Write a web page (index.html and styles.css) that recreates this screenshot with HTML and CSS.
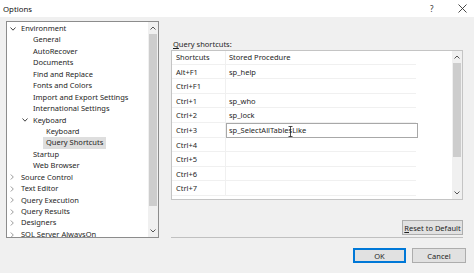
FILE: index.html
```html
<!DOCTYPE html>
<html lang="en">
<head>
    <meta charset="UTF-8">
    <title>Options</title>
    <link rel="stylesheet" href="styles.css">
</head>
<body>
<div class="titlebar">
    <span class="title">Options</span>
    <span class="help">?</span>
    <span class="close">
        <svg width="9" height="9" viewBox="0 0 9 9"><path d="M0.5 0.5L8.5 8.5M8.5 0.5L0.5 8.5" stroke="#333" stroke-width="0.9" fill="none"/></svg>
    </span>
</div>

<div class="main">
    <div class="tree">
        <div class="tree-list">
            <div class="node lv0"><span class="chev"><svg width="6" height="4" viewBox="0 0 6 4"><path d="M0.5 0.5L3 3.2L5.5 0.5" stroke="#444" fill="none"/></svg></span>Environment</div>
            <div class="node lv1"><span class="chev"></span>General</div>
            <div class="node lv1"><span class="chev"></span>AutoRecover</div>
            <div class="node lv1"><span class="chev"></span>Documents</div>
            <div class="node lv1"><span class="chev"></span>Find and Replace</div>
            <div class="node lv1"><span class="chev"></span>Fonts and Colors</div>
            <div class="node lv1"><span class="chev"></span>Import and Export Settings</div>
            <div class="node lv1"><span class="chev"></span>International Settings</div>
            <div class="node lv1"><span class="chev"><svg width="6" height="4" viewBox="0 0 6 4"><path d="M0.5 0.5L3 3.2L5.5 0.5" stroke="#444" fill="none"/></svg></span>Keyboard</div>
            <div class="node lv2"><span class="chev"></span>Keyboard</div>
            <div class="node lv2"><span class="chev"></span><span class="selected">Query Shortcuts</span></div>
            <div class="node lv1"><span class="chev"></span>Startup</div>
            <div class="node lv1"><span class="chev"></span>Web Browser</div>
            <div class="node lv0"><span class="chev"><svg width="4" height="6" viewBox="0 0 4 6"><path d="M0.8 0.5L3.3 3L0.8 5.5" stroke="#999" fill="none"/></svg></span>Source Control</div>
            <div class="node lv0"><span class="chev"><svg width="4" height="6" viewBox="0 0 4 6"><path d="M0.8 0.5L3.3 3L0.8 5.5" stroke="#999" fill="none"/></svg></span>Text Editor</div>
            <div class="node lv0"><span class="chev"><svg width="4" height="6" viewBox="0 0 4 6"><path d="M0.8 0.5L3.3 3L0.8 5.5" stroke="#999" fill="none"/></svg></span>Query Execution</div>
            <div class="node lv0"><span class="chev"><svg width="4" height="6" viewBox="0 0 4 6"><path d="M0.8 0.5L3.3 3L0.8 5.5" stroke="#999" fill="none"/></svg></span>Query Results</div>
            <div class="node lv0"><span class="chev"><svg width="4" height="6" viewBox="0 0 4 6"><path d="M0.8 0.5L3.3 3L0.8 5.5" stroke="#999" fill="none"/></svg></span>Designers</div>
            <div class="node lv0"><span class="chev"><svg width="4" height="6" viewBox="0 0 4 6"><path d="M0.8 0.5L3.3 3L0.8 5.5" stroke="#999" fill="none"/></svg></span>SQL Server AlwaysOn</div>
        </div>
        <div class="vscroll tree-scroll">
            <div class="arrow"><svg width="6" height="4" viewBox="0 0 6 4"><path d="M0.5 3.5L3 1L5.5 3.5" stroke="#555" fill="none"/></svg></div>
            <div class="thumb"></div>
            <div class="track"></div>
            <div class="arrow"><svg width="6" height="4" viewBox="0 0 6 4"><path d="M0.5 0.5L3 3L5.5 0.5" stroke="#555" fill="none"/></svg></div>
        </div>
    </div>

    <div class="panel">
        <div class="label"><u>Q</u>uery shortcuts:</div>
        <div class="grid-box">
            <div class="grid">
                <div class="row head"><div class="c1">Shortcuts</div><div class="c2">Stored Procedure</div></div>
                <div class="row"><div class="c1">Alt+F1</div><div class="c2">sp_help</div></div>
                <div class="row"><div class="c1">Ctrl+F1</div><div class="c2"></div></div>
                <div class="row"><div class="c1">Ctrl+1</div><div class="c2">sp_who</div></div>
                <div class="row"><div class="c1">Ctrl+2</div><div class="c2">sp_lock</div></div>
                <div class="row"><div class="c1">Ctrl+3</div><div class="c2 edit">sp_SelectAllTablesLike
                    <svg class="ibeam" width="5" height="11" viewBox="0 0 5 11"><path d="M0.5 0.5H4.5M2.5 0.5V10.5M0.5 10.5H4.5" stroke="#222" stroke-width="0.8" fill="none"/></svg>
                </div></div>
                <div class="row"><div class="c1">Ctrl+4</div><div class="c2"></div></div>
                <div class="row"><div class="c1">Ctrl+5</div><div class="c2"></div></div>
                <div class="row"><div class="c1">Ctrl+6</div><div class="c2"></div></div>
                <div class="row"><div class="c1">Ctrl+7</div><div class="c2"></div></div>
            </div>
            <div class="vscroll grid-scroll">
                <div class="arrow"><svg width="6" height="4" viewBox="0 0 6 4"><path d="M0.5 3.5L3 1L5.5 3.5" stroke="#555" fill="none"/></svg></div>
                <div class="thumb"></div>
                <div class="track"></div>
                <div class="arrow"><svg width="6" height="4" viewBox="0 0 6 4"><path d="M0.5 0.5L3 3L5.5 0.5" stroke="#555" fill="none"/></svg></div>
            </div>
        </div>
        <div class="reset-row"><button class="btn reset"><u>R</u>eset to Default</button></div>
        <div class="sep"></div>
    </div>
</div>

<div class="footer">
    <button class="btn ok">OK</button>
    <button class="btn cancel">Cancel</button>
</div>
</body>
</html>
```

FILE: styles.css
```css
body{
    margin: 0;
    width: 474px;
    height: 273px;
    overflow: hidden;
    background-color: #f0f0f0;
    font-family: "Noto Sans", "Open Sans", sans-serif;
    font-size: 7.5px;
    color: #1e1e1e;
}
.titlebar{
    height: 17px;
    background-color: #ffffff;
    display: flex;
    align-items: center;
    padding-left: 3px;
}
.title{
    flex: 1;
    font-size: 7.8px;
    color: #111;
}
.help{
    width: 28px;
    font-size: 8px;
    color: #333;
}
.close{
    width: 16px;
    display: flex;
    align-items: center;
}

/* main area */
.main{
    display: flex;
    height: 217px;
    padding: 4px 0 0 6px;
}
.tree{
    width: 151px;
    height: 215px;
    border: 1px solid #8c8c8c;
    background-color: #ffffff;
    display: flex;
}
.tree-list{
    flex: 1;
    padding-top: 1px;
    overflow: hidden;
}
.node{
    height: 11.45px;
    line-height: 11.45px;
    display: flex;
    align-items: center;
    white-space: nowrap;
}
.chev{
    width: 13px;
    display: flex;
    align-items: center;
    padding-left: 2px;
    box-sizing: border-box;
}
.lv0{ padding-left: 1px; }
.lv1{ padding-left: 13px; }
.lv2{ padding-left: 26px; }
.selected{
    background-color: #dedede;
    padding: 0 3px;
    margin-left: -3px;
}

/* scrollbars */
.vscroll{
    width: 10px;
    display: flex;
    flex-direction: column;
    background-color: #f0f0f0;
}
.arrow{
    height: 12px;
    display: flex;
    align-items: center;
    justify-content: center;
}
.thumb{
    background-color: #cdcdcd;
    margin: 0 1px;
}
.track{
    flex: 1;
}
.tree-scroll .thumb{ height: 172px; }
.grid-scroll .thumb{ height: 94px; }

/* right panel */
.panel{
    width: 292px;
    margin-left: 12px;
    display: flex;
    flex-direction: column;
}
.label{
    margin-top: 17px;
    height: 12px;
    line-height: 12px;
    padding-left: 2px;
}
.grid-box{
    height: 148px;
    border: 1px solid #c4c4c4;
    background-color: #ffffff;
    display: flex;
}
.grid{
    flex: 1;
    padding-top: 0;
}
.row{
    display: flex;
    height: 14.6px;
    line-height: 14.6px;
}
.row.head{
    height: 13.7px;
    line-height: 13.7px;
}
.c1{
    width: 54px;
    padding-left: 4px;
    box-sizing: border-box;
    border-right: 1px solid #f0f0f0;
    border-bottom: 1px solid #f0f0f0;
}
.c2{
    width: 190px;
    padding-left: 3px;
    box-sizing: border-box;
    border-bottom: 1px solid #f0f0f0;
    position: relative;
}
.c2.edit{
    width: 192px;
    border: 1px solid #a8a8a8;
    padding-left: 2px;
    line-height: 12.6px;
    margin-right: -2px;
}
.ibeam{
    position: absolute;
    left: 61px;
    top: 2px;
}

.reset-row{
    margin-top: 20px;
    display: flex;
    justify-content: flex-end;
}
.btn{
    height: 15px;
    padding: 0;
    font-family: "Noto Sans", "Open Sans", sans-serif;
    font-size: 7.5px;
    color: #1e1e1e;
    background-color: #e1e1e1;
    border: 1px solid #adadad;
}
.reset{
    width: 61px;
}
.sep{
    margin-top: 2px;
    height: 1px;
    background-color: #c0c0c0;
}

.footer{
    display: flex;
    justify-content: flex-end;
    gap: 6px;
    padding: 10px 8px 0 0;
}
.ok{
    width: 53px;
    border: 1px solid #0078d7;
    box-shadow: inset 0 0 0 1px #0078d7;
}
.cancel{
    width: 54px;
}
```
